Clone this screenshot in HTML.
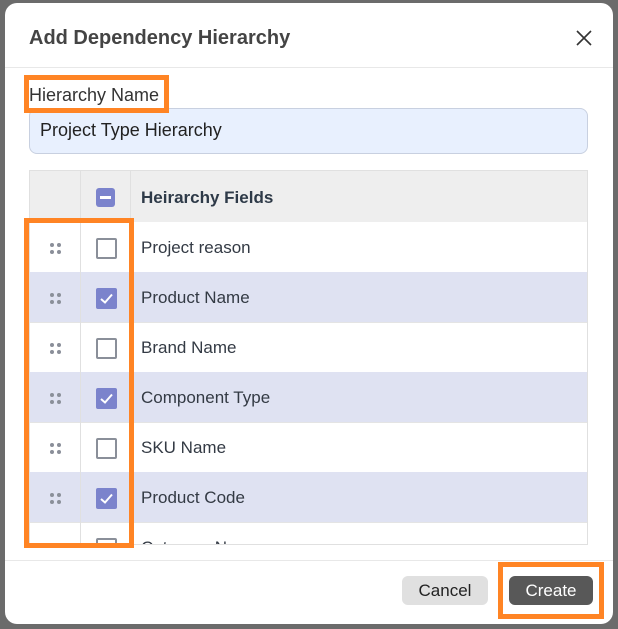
<!DOCTYPE html>
<html><head><style>
body{margin:0;width:618px;height:629px;background:#6b6b6b;font-family:"Liberation Sans",sans-serif;position:relative;overflow:hidden}
.abs{position:absolute}
.modal{left:5px;top:3px;width:608px;height:621px;background:#fff;border-radius:12px}
.row{position:absolute;left:29px;width:559px;height:50px;border-bottom:1px solid #e4e4e4}
.alt{background:#dfe2f2}
.dots{position:absolute;left:20px;top:21px;width:12px;height:12px}
.dots i{position:absolute;width:4px;height:4px;border-radius:50%;background:#8a8f99}
.cb{position:absolute;left:66px;top:16px;width:17px;height:17px;border:2px solid #8a8f99;border-radius:2px;background:#fff}
.cb.on{background:#7b83cc;border-color:#7b83cc}
.lbl{position:absolute;left:111px;top:16px;font-size:17px;color:#333a44}
.vl{position:absolute;top:0;bottom:0;width:1px;background:#e0e0e0}
.orange{position:absolute;border:5px solid #ff8424;box-sizing:border-box}
</style></head><body>
<div class="abs modal"></div>
<div class="abs" style="left:29px;top:27px;font-size:20px;font-weight:bold;color:#444">Add Dependency Hierarchy</div>
<svg class="abs" style="left:575px;top:29px" width="18" height="18"><path d="M2 2L16 16M16 2L2 16" stroke="#333" stroke-width="1.6"/></svg>
<div class="abs" style="left:5px;top:67px;width:608px;height:1px;background:#e8e8e8"></div>
<div class="abs" style="left:29px;top:85px;font-size:18px;color:#333">Hierarchy Name</div>
<div class="abs" style="left:29px;top:108px;width:557px;height:44px;background:#e8f0fe;border:1px solid #c8d0e0;border-radius:8px"></div>
<div class="abs" style="left:40px;top:120px;font-size:18px;color:#222">Project Type Hierarchy</div>
<div class="abs" style="left:29px;top:170px;width:559px;height:375px;border:1px solid #e0e0e0;box-sizing:border-box;overflow:hidden">
 <div class="row" style="left:0;top:0;height:51px;background:#eeeeee;border:0">
  <div style="position:absolute;left:66px;top:17px;width:19px;height:19px;background:#7b83cc;border-radius:3px"><div style="position:absolute;left:4px;top:8px;width:11px;height:3px;background:#fff"></div></div>
  <div class="lbl" style="font-weight:bold;color:#2e3a48;top:17px">Heirarchy Fields</div>
 </div>
 <div class="row" style="left:0;top:51px"><div class="dots"><i style="left:0;top:0"></i><i style="left:7px;top:0"></i><i style="left:0;top:7px"></i><i style="left:7px;top:7px"></i></div><div class="cb"></div><div class="lbl">Project reason</div></div>
 <div class="row alt" style="left:0;top:101px"><div class="dots"><i style="left:0;top:0"></i><i style="left:7px;top:0"></i><i style="left:0;top:7px"></i><i style="left:7px;top:7px"></i></div><div class="cb on"><svg width="17" height="17" style="position:absolute;left:0;top:0"><path d="M3 9L7 12.5L14 4.5" stroke="#fff" stroke-width="2" fill="none"/></svg></div><div class="lbl">Product Name</div></div>
 <div class="row" style="left:0;top:151px"><div class="dots"><i style="left:0;top:0"></i><i style="left:7px;top:0"></i><i style="left:0;top:7px"></i><i style="left:7px;top:7px"></i></div><div class="cb"></div><div class="lbl">Brand Name</div></div>
 <div class="row alt" style="left:0;top:201px"><div class="dots"><i style="left:0;top:0"></i><i style="left:7px;top:0"></i><i style="left:0;top:7px"></i><i style="left:7px;top:7px"></i></div><div class="cb on"><svg width="17" height="17" style="position:absolute;left:0;top:0"><path d="M3 9L7 12.5L14 4.5" stroke="#fff" stroke-width="2" fill="none"/></svg></div><div class="lbl">Component Type</div></div>
 <div class="row" style="left:0;top:251px"><div class="dots"><i style="left:0;top:0"></i><i style="left:7px;top:0"></i><i style="left:0;top:7px"></i><i style="left:7px;top:7px"></i></div><div class="cb"></div><div class="lbl">SKU Name</div></div>
 <div class="row alt" style="left:0;top:301px"><div class="dots"><i style="left:0;top:0"></i><i style="left:7px;top:0"></i><i style="left:0;top:7px"></i><i style="left:7px;top:7px"></i></div><div class="cb on"><svg width="17" height="17" style="position:absolute;left:0;top:0"><path d="M3 9L7 12.5L14 4.5" stroke="#fff" stroke-width="2" fill="none"/></svg></div><div class="lbl">Product Code</div></div>
 <div class="row" style="left:0;top:351px"><div class="dots"><i style="left:0;top:0"></i><i style="left:7px;top:0"></i><i style="left:0;top:7px"></i><i style="left:7px;top:7px"></i></div><div class="cb"></div><div class="lbl">Category Name</div></div>
 <div class="vl" style="left:50px"></div><div class="vl" style="left:100px"></div>
</div>
<div class="abs" style="left:5px;top:560px;width:608px;height:1px;background:#e8e8e8"></div>
<div class="abs" style="left:402px;top:576px;width:86px;height:29px;background:#e0e0e0;border-radius:6px;font-size:17px;color:#222;text-align:center;line-height:29px">Cancel</div>
<div class="abs" style="left:509px;top:576px;width:84px;height:29px;background:#585858;border-radius:6px;font-size:17px;color:#fff;text-align:center;line-height:29px">Create</div>
<div class="orange" style="left:24px;top:75px;width:145px;height:38px"></div>
<div class="orange" style="left:24px;top:218px;width:110px;height:330px"></div>
<div class="orange" style="left:498px;top:562px;width:106px;height:57px"></div>
</body></html>
